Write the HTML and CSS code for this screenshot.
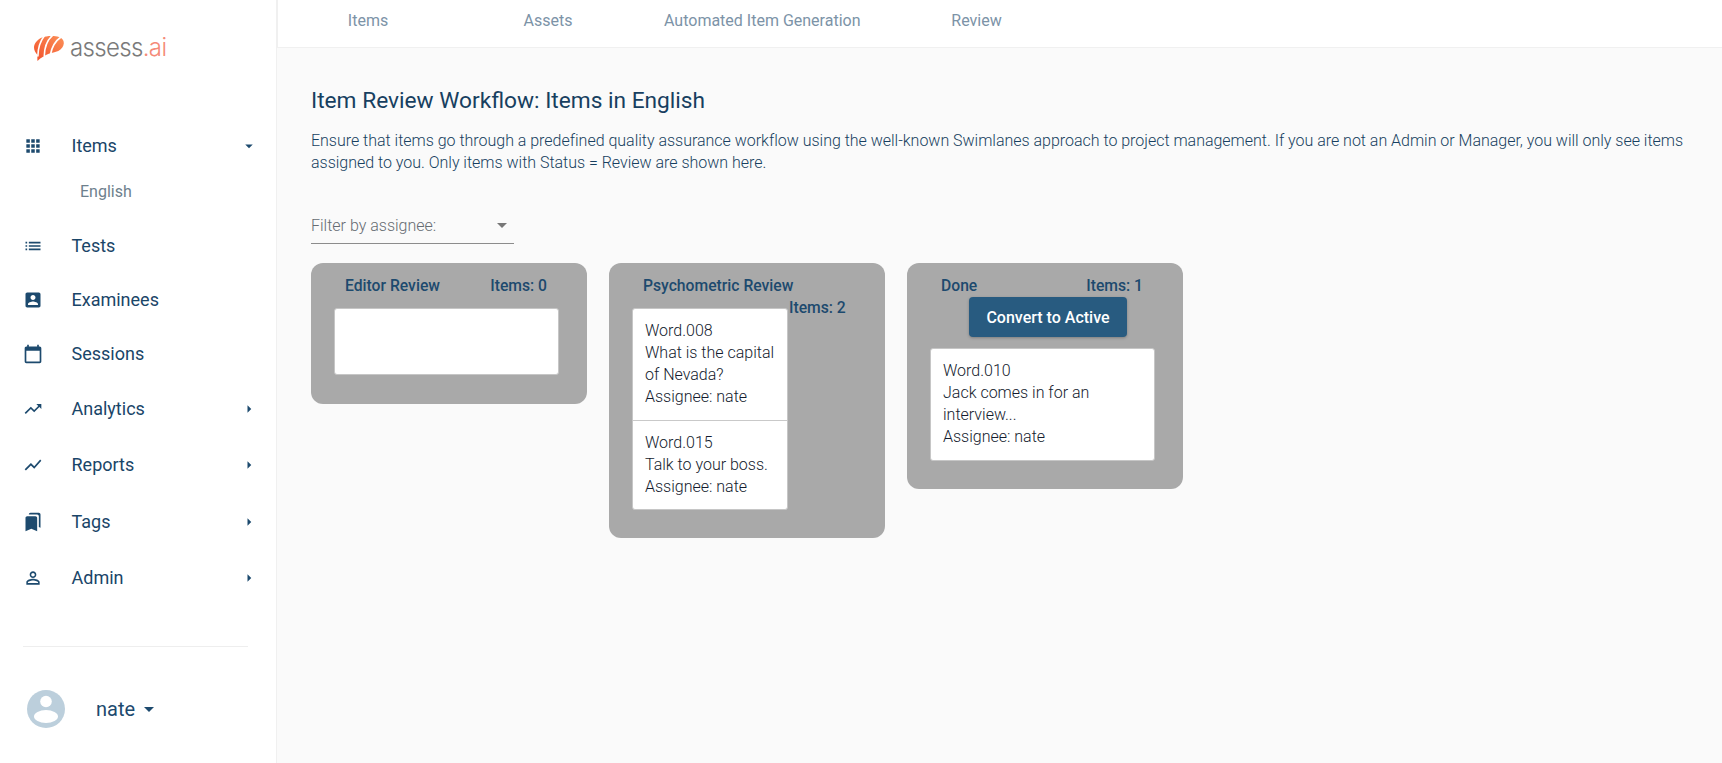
FILE: index.html
```html
<!DOCTYPE html>
<html lang="en">
<head>
<meta charset="utf-8">
<title>Item Review Workflow</title>
<link rel="stylesheet" href="styles.css">
</head>
<body>
<aside class="sidebar">
  <div class="logo">
    <svg class="logo-mark" viewBox="0 0 30 25" width="30" height="25">
      <defs>
        <linearGradient id="flame" x1="0" y1="1" x2="1" y2="0">
          <stop offset="0" stop-color="#f2502a"/>
          <stop offset="1" stop-color="#fb9058"/>
        </linearGradient>
      </defs>
      <path fill="url(#flame)" d="M8 1.500C12 0 20 -.5 25 1c3.500 1.200 5 3.500 4.800 6.500-.3 3-2.300 6-5.500 7.500-3 1.400-6.500 1.500-9.500 2.800C11 19.500 7 21.500 3.500 25c-.2-2-.2-3.500 0-6C1.500 17 0 14 0 11.500 0 7.500 3.500 3.500 8 1.500z"/>
      <path fill="none" stroke="#fff" stroke-width="1.600" stroke-linecap="round" d="M11 -1C6.500 4.500 3.900 11 3.900 20"/>
      <path fill="none" stroke="#fff" stroke-width="1.600" stroke-linecap="round" d="M19 -1C13.500 3.500 10.500 10 10.300 20"/>
      <path fill="none" stroke="#fff" stroke-width="1.600" stroke-linecap="round" d="M27 1C22 4.500 18 10 16.500 18.500"/>
    </svg>
    <span class="logo-text">assess<span class="logo-ai">.ai</span></span>
  </div>
  <nav class="nav">
    <a class="nav-row nav-row-tall">
      <svg class="nav-icon" viewBox="0 0 24 24"><path d="M4 4h4.200v4.200H4zM9.900 4h4.200v4.200H9.900zM15.800 4H20v4.200h-4.200zM4 10h4.200v4.200H4zM9.900 10h4.200v4.200H9.900zM15.800 10H20v4.200h-4.200zM4 16h4.200v4.200H4zM9.900 16h4.200v4.200H9.900zM15.800 16H20v4.200h-4.200z"/></svg>
      <span class="nav-label">Items</span>
      <svg class="nav-caret" viewBox="0 0 24 24"><path d="M7 10l5 5 5-5z"/></svg>
    </a>
    <a class="nav-sub">English</a>
    <a class="nav-row">
      <svg class="nav-icon" viewBox="0 0 24 24"><path d="M3 7h2v2H3zM3 11h2v2H3zM3 15h2v2H3zM7 7h14v2H7zM7 11h14v2H7zM7 15h14v2H7z"/></svg>
      <span class="nav-label">Tests</span>
    </a>
    <a class="nav-row">
      <svg class="nav-icon" viewBox="0 0 24 24"><path d="M3 5v14c0 1.100.9 2 2 2h14c1.100 0 2-.9 2-2V5c0-1.100-.9-2-2-2H5c-1.100 0-2 .9-2 2zm12 4c0 1.660-1.340 3-3 3s-3-1.340-3-3 1.340-3 3-3 3 1.340 3 3zm-9 8c0-2 4-3.100 6-3.100s6 1.100 6 3.100v1H6v-1z"/></svg>
      <span class="nav-label">Examinees</span>
    </a>
    <a class="nav-row">
      <svg class="nav-icon" viewBox="0 0 24 24"><path d="M20 3h-1V1h-2v2H7V1H5v2H4c-1.100 0-2 .9-2 2v16c0 1.100.9 2 2 2h16c1.100 0 2-.9 2-2V5c0-1.100-.9-2-2-2zm0 18H4V8h16v13z"/></svg>
      <span class="nav-label">Sessions</span>
    </a>
    <a class="nav-row nav-row-tall">
      <svg class="nav-icon" viewBox="0 0 24 24"><path d="M16 6l2.290 2.290-4.880 4.880-4-4L2 16.590 3.410 18l6-6 4 4 6.300-6.290L22 12V6z"/></svg>
      <span class="nav-label">Analytics</span>
      <svg class="nav-caret" viewBox="0 0 24 24"><path d="M10 17l5-5-5-5z"/></svg>
    </a>
    <a class="nav-row nav-row-tall">
      <svg class="nav-icon" viewBox="0 0 24 24"><path d="M3.500 18.490l6-6.010 4 4L22 6.920l-1.410-1.410-7.090 7.970-4-4L2 16.990z"/></svg>
      <span class="nav-label">Reports</span>
      <svg class="nav-caret" viewBox="0 0 24 24"><path d="M10 17l5-5-5-5z"/></svg>
    </a>
    <a class="nav-row nav-row-tags">
      <svg class="nav-icon" viewBox="0 0 24 24"><path d="M19 18l2 1V3c0-1.100-.9-2-2-2H8.990C7.890 1 7 1.900 7 3h10c1.100 0 2 .9 2 2v13zM15 5H5c-1.100 0-2 .9-2 2v16l7-3 7 3V7c0-1.100-.9-2-2-2z"/></svg>
      <span class="nav-label">Tags</span>
      <svg class="nav-caret" viewBox="0 0 24 24"><path d="M10 17l5-5-5-5z"/></svg>
    </a>
    <a class="nav-row nav-row-tall">
      <svg class="nav-icon" viewBox="0 0 24 24"><path d="M12 5.900c1.160 0 2.100.94 2.100 2.100s-.94 2.100-2.100 2.100S9.900 9.160 9.900 8s.94-2.100 2.100-2.100m0 9c2.970 0 6.100 1.460 6.100 2.100v1.100H5.900V17c0-.64 3.130-2.100 6.100-2.100M12 4C9.790 4 8 5.790 8 8s1.790 4 4 4 4-1.790 4-4-1.790-4-4-4zm0 9c-2.670 0-8 1.340-8 4v3h16v-3c0-2.660-5.330-4-8-4z"/></svg>
      <span class="nav-label">Admin</span>
      <svg class="nav-caret" viewBox="0 0 24 24"><path d="M10 17l5-5-5-5z"/></svg>
    </a>
  </nav>
  <hr class="side-rule">
  <div class="user">
    <svg class="avatar" viewBox="0 0 38 38" width="38" height="38">
      <circle cx="19" cy="19" r="19" fill="#bccfdc"/>
      <circle cx="19" cy="11.500" r="5.800" fill="#fff"/>
      <ellipse cx="19" cy="26.500" rx="12" ry="6.500" fill="#fff"/>
    </svg>
    <span class="user-name">nate</span>
    <svg class="user-caret" viewBox="0 0 24 24"><path d="M7 10l5 5 5-5z"/></svg>
  </div>
</aside>
<div class="page">
  <header class="tabs">
    <a class="tab">Items</a>
    <a class="tab">Assets</a>
    <a class="tab">Automated Item Generation</a>
    <a class="tab">Review</a>
  </header>
  <main class="content">
    <h1 class="title">Item Review Workflow: Items in English</h1>
    <p class="intro">Ensure that items go through a predefined quality assurance workflow using the well-known Swimlanes approach to project management. If you are not an Admin or Manager, you will only see items assigned to you. Only items with Status = Review are shown here.</p>
    <div class="filter">
      <span>Filter by assignee:</span>
      <svg class="filter-caret" viewBox="0 0 24 24"><path d="M7 10l5 5 5-5z"/></svg>
    </div>
    <div class="board">
      <section class="lane">
        <div class="lane-head"><span>Editor Review</span><span>Items: 0</span></div>
        <div class="drop drop-empty"></div>
      </section>
      <section class="lane">
        <div class="lane-head lane-head-wrap"><span>Psychometric Review</span><span class="lane-count-wrapped">Items: 2</span></div>
        <div class="drop drop-narrow">
          <div class="card">Word.008<br>What is the capital of Nevada?<br>Assignee: nate</div>
          <div class="card">Word.015<br>Talk to your boss.<br>Assignee: nate</div>
        </div>
      </section>
      <section class="lane">
        <div class="lane-head lane-head-tight"><span>Done</span><span>Items: 1</span></div>
        <button class="convert">Convert to Active</button>
        <div class="drop">
          <div class="card">Word.010<br>Jack comes in for an interview...<br>Assignee: nate</div>
        </div>
      </section>
    </div>
  </main>
</div>
</body>
</html>
```
FILE: styles.css
```css
* { box-sizing: border-box; }
html, body { height: 100%; }
body {
  margin: 0;
  display: flex;
  height: 763px;
  overflow: hidden;
  background: #fafafa;
  font-family: Roboto, "Liberation Sans", sans-serif;
  color: #1d4a6e;
}
.sidebar {
  width: 277px;
  flex: none;
  background: #fff;
  border-right: 1px solid #f0f0f0;
  display: flex;
  flex-direction: column;
}
.logo {
  height: 118px;
  padding: 36px 0 0 34px;
  display: flex;
  align-items: flex-start;
  gap: 6px;
}
.logo-mark { flex: none; }
.logo-text {
  font-family: Inter, sans-serif;
  font-weight: 300;
  font-size: 24px;
  line-height: 24px;
  letter-spacing: -.65px;
  color: #7a7a7a;
}
.logo-ai { color: #f58a78; }
.nav { display: flex; flex-direction: column; }
.nav-row {
  height: 54px;
  display: flex;
  align-items: center;
  padding: 0 18px 0 23px;
}
.nav-row-tall { height: 56px; }
.nav-row-tags { height: 57px; }
.nav-icon { width: 20px; height: 20px; fill: #1d4a6e; flex: none; }
.nav-label {
  margin-left: 28.5px;
  padding-bottom: 1px;
  flex: 1;
  font-size: 18px;
  font-weight: 400;
  color: #1a4568;
}
.nav-caret { width: 18px; height: 18px; fill: #1d4a6e; flex: none; }
.nav-sub {
  height: 45px;
  padding: 0 0 11px 80px;
  display: flex;
  align-items: center;
  font-size: 16px;
  color: #6d7f8d;
}
.side-rule {
  margin: 40px 28px 0 23px;
  border: 0;
  border-top: 1px solid #eeeeee;
}
.user {
  margin-top: 43px;
  padding-left: 27px;
  display: flex;
  align-items: center;
}
.avatar { flex: none; }
.user-name {
  margin-left: 31px;
  font-size: 20px;
  color: #1d4a6e;
}
.user-caret { width: 24px; height: 24px; fill: #1d4a6e; margin-left: 2px; }
.page { flex: 1; min-width: 0; display: flex; flex-direction: column; }
.tabs {
  height: 48px;
  flex: none;
  background: #fff;
  border-bottom: 1px solid #f0f0f0;
  border-left: 1px solid #f0f0f0;
  display: flex;
  align-items: center;
  padding-bottom: 6px;
}
.tab {
  min-width: 180px;
  padding: 0 26px;
  text-align: center;
  font-size: 16px;
  color: #7c93a7;
}
.content { padding: 39px 30px 0 34px; }
.title {
  margin: 0;
  font-size: 22.7px;
  line-height: 28px;
  font-weight: 400;
  color: #173f60;
}
.intro {
  margin: 15px 0 0;
  font-size: 16px;
  font-weight: 300;
  line-height: 22px;
  letter-spacing: -.015px;
  color: #173f60;
}
.filter {
  margin-top: 38px;
  width: 203px;
  height: 32px;
  border-bottom: 1px solid #8c8c8c;
  display: flex;
  justify-content: space-between;
  align-items: center;
  font-size: 16px;
  font-weight: 300;
  color: #666c72;
  padding-bottom: 5px;
}
.filter-caret { width: 24px; height: 24px; fill: #777; }
.board { margin-top: 19px; display: flex; align-items: flex-start; gap: 22px; }
.lane {
  width: 276px;
  background: #a9a9a9;
  border-radius: 12px;
  padding: 14px 23px 28px;
}
.lane-head {
  display: flex;
  justify-content: space-between;
  padding: 0 17px 0 11px;
  font-size: 15.7px;
  line-height: 17px;
  font-weight: 500;
  color: #1d4a6e;
  margin-bottom: 14px;
}
.lane-head-wrap { display: block; margin-bottom: 0; padding-right: 0; height: 31px; }
.lane-count-wrapped { display: block; width: fit-content; margin: 5px 0 0 146px; }
.lane-head-tight { margin-bottom: 3px; }
.drop {
  width: 225px;
  background: #fff;
  border-radius: 3px;
  border: 1px solid #c6c6c6;
}
.drop-empty { height: 67px; margin-bottom: 1px; }
.drop-narrow { width: 156px; }
.card {
  padding: 11px 12px 12px;
  font-size: 16px;
  font-weight: 300;
  line-height: 22px;
  color: #141b2e;
}
.card + .card { border-top: 1px solid #c9c9c9; padding-bottom: 11px; }
.convert {
  display: block;
  width: 158px;
  height: 40px;
  margin: 0 0 11px 39px;
  background: #285b80;
  border: 0;
  border-radius: 4px;
  box-shadow: 0 1px 3px rgba(0,0,0,.25);
  color: #fff;
  font-family: inherit;
  font-size: 16px;
  font-weight: 500;
}
```
